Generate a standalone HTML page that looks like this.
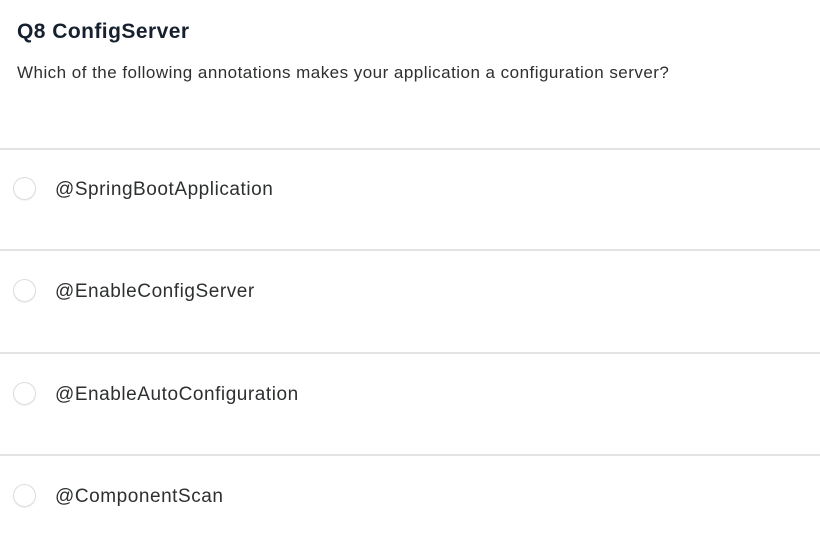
<!DOCTYPE html>
<html><head><style>
body{margin:0;width:820px;height:542px;background:#fff;font-family:"Liberation Sans",sans-serif;color:#1c1d1f;overflow:hidden;position:relative}
h1{position:absolute;left:17px;top:20px;margin:0;font-size:21px;letter-spacing:0.45px;font-weight:bold;color:#16202e}
.q{position:absolute;left:17px;top:63px;font-size:17px;letter-spacing:0.47px;color:#2d2f31}
.line{position:absolute;left:0;width:820px;height:2px;background:#e3e3e3}
.opt{position:absolute;left:0;width:820px;height:24px}
.c{position:absolute;left:13px;top:0;width:21px;height:21px;border:1.5px solid #dcdcdc;border-radius:50%;box-shadow:0 1px 1px rgba(0,0,0,.06)}
.t{position:absolute;left:55px;top:2px;font-size:19px;letter-spacing:0.55px;color:#2d2f31;line-height:22px}
</style></head><body>
<h1>Q8 ConfigServer</h1>
<div class="q">Which of the following annotations makes your application a configuration server?</div>
<div class="line" style="top:148px"></div>
<div class="opt" style="top:177px"><div class="c"></div><div class="t">@SpringBootApplication</div></div>
<div class="line" style="top:249px"></div>
<div class="opt" style="top:279px"><div class="c"></div><div class="t">@EnableConfigServer</div></div>
<div class="line" style="top:352px"></div>
<div class="opt" style="top:382px"><div class="c"></div><div class="t">@EnableAutoConfiguration</div></div>
<div class="line" style="top:454px"></div>
<div class="opt" style="top:484px"><div class="c"></div><div class="t">@ComponentScan</div></div>
</body></html>
